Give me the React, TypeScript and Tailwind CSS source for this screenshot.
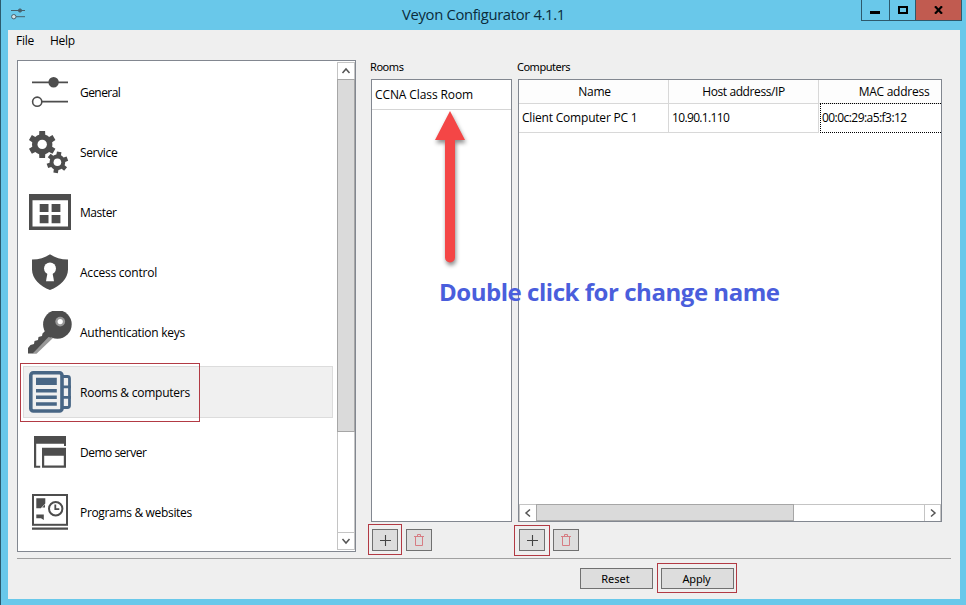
import clsx from "clsx";
import { useState } from "react";
import type { ReactNode } from "react";

const INK = "#4d4d4d";

// Outline of a cog wheel: each tooth is a trapezoid on top of the root circle
function gearPath(cx: number, cy: number, outer: number, root: number, teeth: number, turn = 0) {
  const step = (Math.PI * 2) / teeth;
  const pts: string[] = [];
  for (let i = 0; i < teeth; i++) {
    const a = turn + i * step - Math.PI / 2;
    const corners = [
      [root, -0.5],
      [root, -0.29],
      [outer, -0.2],
      [outer, 0.2],
      [root, 0.29],
    ];
    corners.forEach(([r, k]) => {
      pts.push(`${(cx + r * Math.cos(a + k * step)).toFixed(2)} ${(cy + r * Math.sin(a + k * step)).toFixed(2)}`);
    });
  }
  return `M${pts.join("L")}Z`;
}

function Icon({ children }: { children: ReactNode }) {
  return (
    <svg viewBox="0 0 44 44" width={44} height={44} className="shrink-0" fill={INK}>
      {children}
    </svg>
  );
}

function GeneralIcon() {
  return (
    <Icon>
      <path d="M4 11.4h36M13 30.6h27" stroke={INK} strokeWidth={1.7} />
      <circle cx={25.6} cy={11.2} r={5.2} />
      <circle cx={9.2} cy={30.7} r={4.6} fill="#fff" stroke={INK} strokeWidth={1.6} />
    </Icon>
  );
}

function ServiceIcon() {
  return (
    <Icon>
      <path d={gearPath(14.2, 13.4, 13.9, 10.2, 6)} />
      <circle cx={14.2} cy={13.4} r={4.7} fill="#fff" />
      <path d={gearPath(29.4, 31.3, 10.9, 7.8, 6, 0.17)} />
      <circle cx={29.4} cy={31.3} r={3.8} fill="#fff" />
    </Icon>
  );
}

function MasterIcon() {
  return (
    <Icon>
      <path d="M1 3h42v36H1z" />
      <path d="M4.5 9.3H40v26.2H4.5z" fill="#fff" />
      <path d="M11.7 13h8.8v8h-8.8zM23.6 13h8.8v8h-8.8zM11.7 24h8.8v8.2h-8.8zM23.6 24h8.8v8.2h-8.8z" />
    </Icon>
  );
}

function AccessIcon() {
  return (
    <Icon>
      <path d="M22 3.2C17 6.6 11 8.4 4 8.6v10C4 27.5 12 35.5 22 39c10-3.5 18-11.5 18-20.4v-10C33 8.4 27 6.6 22 3.2z" />
      <circle cx={22} cy={17.4} r={6} fill="#fff" />
      <path d="M20 19h4l2 11.2h-8z" fill="#fff" />
    </Icon>
  );
}

function KeyIcon() {
  return (
    <Icon>
      <path d="M18 19l-3.5 3.5L14 25l-3.5 1-.5 3-3.5 1-.5 3-3.5 1L0 37v5.5h5L25 25z" />
      <path d="M20.5 26l-16 16.800h4L25 27z" fill="#999" />
      <circle cx={29.4} cy={13.4} r={14.3} />
      <circle cx={32.2} cy={10.6} r={4.9} fill="#999" />
      <circle cx={32.2} cy={10.6} r={2.6} fill="#fff" />
    </Icon>
  );
}

function RoomsIcon() {
  return (
    <Icon>
      <g fill="none" stroke="#486685">
        <rect x={2.8} y={1.8} width={31.2} height={38.2} rx={2.5} strokeWidth={3.6} />
        <path d="M35 5.5h4.5q2 0 2 2v27q0 2-2 2H35M35 15.8h8M35 26.4h8" strokeWidth={2.8} />
      </g>
      <path d="M8 6.7h20.8V14H8zM8 18h20.8v3.4H8zM8 24.6h20.8V28H8zM8 31.3h20.8v3.4H8z" fill="#486685" />
    </Icon>
  );
}

function DemoIcon() {
  return (
    <Icon>
      <path d="M6 5h32v10h-2v-2.2H8.2v22h4v2H6z" />
      <path d="M14 16.7h24v20H14zM16.2 24.8v9.8h19.6v-9.8z" fillRule="evenodd" />
    </Icon>
  );
}

function ProgramsIcon() {
  return (
    <Icon>
      <rect x={5} y={4} width={34} height={29.8} fill="none" stroke={INK} strokeWidth={2} />
      <path d="M4 36.5h36v2.2H4zM8.3 7.3h9v5.2l-4.5 4.8H8.3zM17 13.5v3h-2.8zM8.3 23.4h7.5V29L13 27.2H8.3z" />
      <circle cx={27.7} cy={17.7} r={6.7} fill="none" stroke={INK} strokeWidth={2} />
      <path d="M27.3 13.5v4.7h4" fill="none" stroke={INK} strokeWidth={1.8} />
    </Icon>
  );
}

const PAGES = [
  { label: "General", icon: <GeneralIcon />, spacing: "tracking-[-0.55px]" },
  { label: "Service", icon: <ServiceIcon />, spacing: "tracking-[-0.35px]" },
  { label: "Master", icon: <MasterIcon />, spacing: "tracking-[-0.45px]" },
  { label: "Access control", icon: <AccessIcon />, spacing: "tracking-[-0.22px]" },
  { label: "Authentication keys", icon: <KeyIcon />, spacing: "tracking-[-0.28px]" },
  { label: "Rooms & computers", icon: <RoomsIcon />, spacing: "tracking-[-0.24px]" },
  { label: "Demo server", icon: <DemoIcon />, spacing: "tracking-[-0.5px]" },
  { label: "Programs & websites", icon: <ProgramsIcon />, spacing: "tracking-[-0.33px]" },
];

function Chevron({ d }: { d: string }) {
  return (
    <svg viewBox="0 0 10 10" width={10} height={10} fill="none" stroke="#555" strokeWidth={1.5}>
      <path d={d} />
    </svg>
  );
}

// Red frame drawn around the controls that matter in this step
function Highlight({ className }: { className: string }) {
  return <span className={clsx("absolute border border-[#b23a44] pointer-events-none", className)} />;
}

function ToolButton({ kind, highlight }: { kind: "add" | "delete"; highlight?: string }) {
  return (
    <button
      aria-label={kind}
      className="relative w-[26px] h-[22px] border border-[#707070] bg-[#dddddd] flex items-center justify-center"
    >
      {kind === "add" ? (
        <svg viewBox="0 0 12 12" width={12} height={12} stroke="#444" strokeWidth={1.1}>
          <path d="M6.5 1v11M1 6.5h11" />
        </svg>
      ) : (
        <svg viewBox="0 0 12 14" width={12} height={14} fill="none" stroke="#d67c83" strokeWidth={1}>
          <path d="M1 3.5h10M4.5 3.5v-2h3v2M2.5 4v8.5h7V4" />
        </svg>
      )}
      {highlight && <Highlight className={highlight} />}
    </button>
  );
}

function TitleBar() {
  return (
    <header className="relative h-[30px] shrink-0 flex items-start justify-between">
      <svg viewBox="0 0 16 12" width={16} height={12} className="ml-[9px] mt-[8px]" stroke="#47606c" fill="none">
        <path d="M1 2.5h14M6 8.7h9" />
        <circle cx={10} cy={2.5} r={1.6} fill="#47606c" />
        <circle cx={3.8} cy={8.7} r={2.2} fill="#d5e5ea" />
      </svg>
      <h1 className="absolute inset-x-0 top-[4px] text-center text-[14.8px] leading-5 text-[#0b2b3a] tracking-[-0.34px]">
        Veyon Configurator 4.1.1
      </h1>
      <div className="relative flex h-[21px] mr-1 border border-t-0 border-[#2d596c]">
        <button aria-label="Minimize" className="w-[28px] border-r border-[#2d596c] flex justify-center pt-[11px]">
          <span className="w-[10px] h-[3px] -ml-px bg-black" />
        </button>
        <button aria-label="Maximize" className="w-[26px] border-r border-[#2d596c] flex justify-center pt-[6px]">
          <span className="w-[10px] h-[8px] border-2 border-black" />
        </button>
        <button aria-label="Close" className="w-[45px] bg-[#c15b50] flex justify-center pt-[6px]">
          <svg viewBox="0 0 9 8" width={9} height={8} stroke="#000" strokeWidth={2.2}>
            <path d="M1 .3l7 7.4M8 .3L1 7.7" />
          </svg>
        </button>
      </div>
    </header>
  );
}

function Sidebar({ current, onSelect }: { current: string; onSelect: (label: string) => void }) {
  return (
    <nav className="w-[339px] h-[492px] bg-white border border-[#828790] flex py-px">
      <ul className="flex-1 pl-[5px] pr-[4px] overflow-hidden">
        {PAGES.map((page) => (
          <li key={page.label} className="h-[60px] py-1">
            <button
              onClick={() => onSelect(page.label)}
              className={clsx(
                "relative w-full h-[52px] pl-1 flex items-center gap-2 border text-black",
                current === page.label ? "bg-[#f0f0f0] border-[#dcdcdc]" : "border-transparent",
              )}
            >
              <span className="mt-px">{page.icon}</span>
              <span className={clsx("whitespace-nowrap mt-px", page.spacing)}>{page.label}</span>
              {current === page.label && <Highlight className="-left-1 -top-[4px] w-[180px] h-[59px]" />}
            </button>
          </li>
        ))}
      </ul>
      <div className="w-[18px] flex flex-col border border-[#c4c4c4]">
        <span className="h-[16px] flex items-center justify-center">
          <Chevron d="M1.5 7 5 3l3.5 4" />
        </span>
        <span className="h-[353px] -mx-px bg-[#dadada] border border-[#a6a6a6]" />
        <span className="flex-1" />
        <span className="h-[17px] border-t border-[#c4c4c4] flex items-center justify-center">
          <Chevron d="M1.5 3 5 7l3.5-4" />
        </span>
      </div>
    </nav>
  );
}

function RoomsPanel() {
  return (
    <section className="w-[141px] flex flex-col">
      <h2 className="h-[19px] -ml-px font-['Noto_Sans'] text-[11px] leading-[14px] tracking-[-0.45px]">Rooms</h2>
      <div className="h-[443px] bg-white border border-[#828790]">
        <div className="h-[30px] border-b border-[#d5d5d5] pl-[3px] flex items-center tracking-[-0.1px]">
          CCNA Class Room
        </div>
      </div>
      <div className="flex gap-2 mt-[7px] ml-px">
        <ToolButton kind="add" highlight="-left-[5px] -top-[6px] w-[34px] h-[31px]" />
        <ToolButton kind="delete" />
      </div>
    </section>
  );
}

function ComputersPanel() {
  return (
    <section className="w-[424px] flex flex-col">
      <h2 className="h-[19px] -ml-px font-['Noto_Sans'] text-[11px] leading-[14px] tracking-[-0.5px]">Computers</h2>
      <div className="h-[443px] bg-white border border-[#828790] flex flex-col">
        <div className="grid grid-cols-[150px_150px_1fr] h-[24px] text-center leading-[23px] border-b border-[#d8d8d8] bg-[#fdfdfd]">
          <span className="pl-[2px] border-r border-[#d8d8d8] tracking-[-0.3px]">Name</span>
          <span className="border-r border-[#d8d8d8] tracking-[-0.4px]">Host address/IP</span>
          <span className="pl-[28px] tracking-[-0.25px]">MAC address</span>
        </div>
        <div className="grid grid-cols-[150px_150px_1fr] h-[29px] leading-[28px]">
          <span className="pl-[3px] border-r border-b border-[#d8d8d8] tracking-[-0.2px]">Client Computer PC 1</span>
          <span className="pl-[3px] border-r border-b border-[#d8d8d8] tracking-[-0.65px]">10.90.1.110</span>
          <span className="pl-px ml-px -mt-px border border-r-0 border-dotted border-black tracking-[-0.55px]">
            00:0c:29:a5:f3:12
          </span>
        </div>
        <div className="flex-1" />
        <div className="h-[17px] flex border border-b-0 border-[#c4c4c4]">
          <span className="w-[16px] flex items-center justify-center">
            <Chevron d="M7 1.5 3 5l4 3.5" />
          </span>
          <span className="w-[258px] -mt-px bg-[#dadada] border border-[#a6a6a6]" />
          <span className="flex-1" />
          <span className="w-[16px] border-l border-[#c4c4c4] flex items-center justify-center">
            <Chevron d="M3 1.5 7 5 3 8.5" />
          </span>
        </div>
      </div>
      <div className="flex gap-2 mt-[7px] ml-px">
        <ToolButton kind="add" highlight="-left-[6px] -top-[5px] w-[36px] h-[31px]" />
        <ToolButton kind="delete" />
      </div>
    </section>
  );
}

function Callout() {
  return (
    <>
      <svg
        viewBox="0 0 44 170"
        width={44}
        height={170}
        className="absolute left-[427px] top-[105px] drop-shadow-[1px_3px_2px_rgba(0,0,0,0.45)] pointer-events-none"
        fill="#f44646"
      >
        <path d="M22 6 37 35H27v117.5a5 5 0 0 1-10 0V35H7z" />
      </svg>
      <p className="absolute left-[438px] top-[276px] text-[24px] leading-8 font-bold text-[#4a5edc] whitespace-nowrap tracking-[-0.46px] pointer-events-none">
        Double click for change name
      </p>
    </>
  );
}

export default function App() {
  const [current, setCurrent] = useState("Rooms & computers");

  return (
    <div className="relative w-[966px] h-[605px] overflow-hidden bg-[#69c8ea] border-l border-[#2b5b6e] flex flex-col font-['Open_Sans',sans-serif] text-[12px] text-black">
      <TitleBar />
      <main className="ml-[7px] mr-[6px] h-[569px] bg-[#efefef]">
        <div className="h-[30px] pl-2 pt-[3px] flex gap-4 leading-4 tracking-[-0.25px]">
          <span>File</span>
          <span>Help</span>
        </div>
        <div className="flex pl-[9px]">
          <Sidebar current={current} onSelect={setCurrent} />
          <div className="ml-[15px] flex gap-[6px]">
            <RoomsPanel />
            <ComputersPanel />
          </div>
        </div>
        <div className="mt-[6px] ml-[9px] mr-[9px] h-px bg-[#a0a0a0]" />
        <div className="flex gap-2 mt-[9px] ml-[572px] font-['Noto_Sans'] text-[11px]">
          <button className="w-[73px] h-[21px] pr-0.5 border border-[#707070] bg-[#dddddd] leading-[19px]">
            Reset
          </button>
          <button className="relative w-[73px] h-[21px] pr-0.5 border border-[#707070] bg-[#dddddd] leading-[19px] tracking-[-0.2px]">
            Apply
            <Highlight className="-left-[5px] -top-[6px] w-[80px] h-[30px]" />
          </button>
        </div>
      </main>
      <Callout />
    </div>
  );
}
